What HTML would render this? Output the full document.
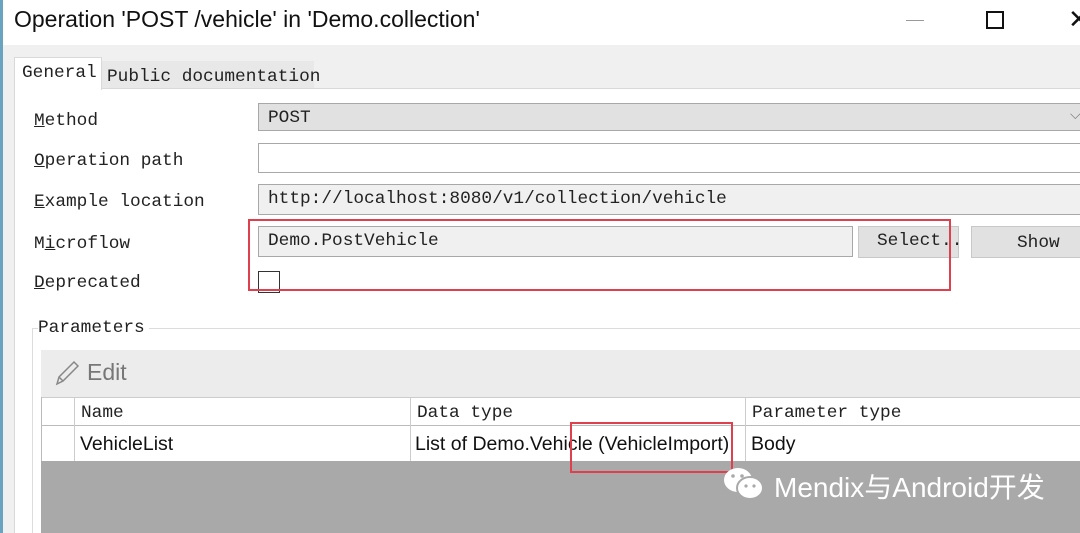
<!DOCTYPE html>
<html><head><meta charset="utf-8"><style>
*{margin:0;padding:0;box-sizing:border-box}
body{width:1080px;height:533px;overflow:hidden;background:#fff;position:relative;font-family:"Liberation Mono","Noto Sans CJK SC",monospace;color:#222}
.a{position:absolute}
.m{font-size:17.8px;font-family:"Liberation Mono",monospace;white-space:nowrap}
.s{font-family:"Liberation Sans","Noto Sans CJK SC",sans-serif;white-space:nowrap}
.fld{position:absolute;border:1px solid #a8a8a8}
u{text-decoration:underline}
</style></head><body>
<div class="a" style="left:0;top:0;width:3px;height:533px;background:#6aa3c0"></div>
<div class="a s" style="left:14px;top:6px;font-size:23px;color:#111">Operation 'POST /vehicle' in 'Demo.collection'</div>
<div class="a" style="left:906px;top:20px;width:18px;height:1px;background:#999"></div>
<div class="a" style="left:986px;top:11px;width:18px;height:18px;border:2px solid #111"></div>
<div class="a s" style="left:1068px;top:4px;font-size:26px;color:#111">✕</div>
<div class="a" style="left:3px;top:45px;width:1077px;height:43px;background:#f0f0f0"></div>
<div class="a" style="left:3px;top:88px;width:11px;height:445px;background:#f0f0f0"></div>
<div class="a" style="left:14px;top:88px;width:1066px;height:1px;background:#d9d9d9"></div>
<div class="a" style="left:14px;top:88px;width:1px;height:445px;background:#d9d9d9"></div>
<div class="a" style="left:102px;top:61px;width:212px;height:27px;background:#e8e8e8"></div>
<div class="a" style="left:14px;top:57px;width:88px;height:33px;background:#fff;border:1px solid #d9d9d9;border-bottom:none"></div>
<div class="a m" style="left:22px;top:63px">General</div>
<div class="a m" style="left:107px;top:67px">Public documentation</div>

<div class="a m" style="left:34px;top:111px"><u>M</u>ethod</div>
<div class="a m" style="left:34px;top:151px"><u>O</u>peration path</div>
<div class="a m" style="left:34px;top:192px"><u>E</u>xample location</div>
<div class="a m" style="left:34px;top:234px">M<u>i</u>croflow</div>
<div class="a m" style="left:34px;top:273px"><u>D</u>eprecated</div>

<div class="fld" style="left:258px;top:103px;width:830px;height:28px;background:#e1e1e1"></div>
<div class="a m" style="left:268px;top:108px">POST</div>
<div class="a s" style="left:1070px;top:106px;font-size:14px;color:#777">⌵</div>
<div class="fld" style="left:258px;top:143px;width:830px;height:30px;background:#fff"></div>
<div class="fld" style="left:258px;top:184px;width:830px;height:31px;background:#f0f0f0"></div>
<div class="a m" style="left:268px;top:189px">http://localhost:8080/v1/collection/vehicle</div>
<div class="fld" style="left:258px;top:226px;width:595px;height:31px;background:#f0f0f0"></div>
<div class="a m" style="left:268px;top:231px">Demo.PostVehicle</div>
<div class="fld" style="left:858px;top:226px;width:101px;height:32px;background:#e1e1e1;border-color:#c8c8c8"></div>
<div class="a m" style="left:877px;top:231px">Select..</div>
<div class="fld" style="left:971px;top:226px;width:120px;height:32px;background:#e1e1e1;border-color:#c8c8c8"></div>
<div class="a m" style="left:1017px;top:233px">Show</div>
<div class="a" style="left:258px;top:271px;width:22px;height:22px;border:1.5px solid #333"></div>
<div class="a" style="left:248px;top:219px;width:703px;height:72px;border:2px solid #e0404e"></div>

<div class="a" style="left:32px;top:328px;width:1048px;height:1px;background:#dcdcdc"></div>
<div class="a" style="left:32px;top:328px;width:1px;height:205px;background:#dcdcdc"></div>
<div class="a m" style="left:38px;top:318px;background:#fff;padding-right:4px">Parameters</div>
<div class="a" style="left:41px;top:350px;width:1039px;height:47px;background:#ececec"></div>
<svg class="a" style="left:54px;top:360px" width="26" height="26" viewBox="0 0 26 26"><path d="M3 24 L5 17 L20 2 L24 6 L9 21 Z M5 17 L9 21" fill="none" stroke="#888" stroke-width="1.5"/></svg>
<div class="a s" style="left:87px;top:359px;font-size:23px;color:#777">Edit</div>
<div class="a" style="left:41px;top:397px;width:1039px;height:64px;background:#fff;border-top:1px solid #ccc"></div>
<div class="a" style="left:41px;top:425px;width:1039px;height:1px;background:#bbb"></div>
<div class="a" style="left:41px;top:397px;width:1px;height:64px;background:#bbb"></div>
<div class="a" style="left:74px;top:397px;width:1px;height:64px;background:#ccc"></div>
<div class="a" style="left:410px;top:397px;width:1px;height:64px;background:#ccc"></div>
<div class="a" style="left:745px;top:397px;width:1px;height:64px;background:#ccc"></div>
<div class="a m" style="left:81px;top:403px">Name</div>
<div class="a m" style="left:417px;top:403px">Data type</div>
<div class="a m" style="left:752px;top:403px">Parameter type</div>
<div class="a s" style="left:80px;top:433px;font-size:19.5px;color:#111">VehicleList</div>
<div class="a s" style="left:415px;top:433px;font-size:19.5px;color:#111">List of Demo.Vehicle (VehicleImport)</div>
<div class="a s" style="left:751px;top:433px;font-size:19.5px;color:#111">Body</div>
<div class="a" style="left:41px;top:461px;width:1039px;height:72px;background:#a9a9a9"></div>
<div class="a" style="left:570px;top:422px;width:163px;height:51px;border:2px solid #e0404e"></div>
<svg class="a" style="left:720px;top:464px" width="50" height="40" viewBox="0 0 50 40"><ellipse cx="18" cy="16" rx="14" ry="12" fill="#fff"/><ellipse cx="30" cy="24" rx="13" ry="11" fill="#fff" stroke="#a9a9a9" stroke-width="2"/><circle cx="13" cy="12" r="1.8" fill="#a9a9a9"/><circle cx="22" cy="12" r="1.8" fill="#a9a9a9"/><circle cx="26" cy="22" r="1.6" fill="#a9a9a9"/><circle cx="34" cy="22" r="1.6" fill="#a9a9a9"/></svg>
<div class="a s" style="left:774px;top:466px;font-size:28px;color:#fff">Mendix与Android开发</div>
</body></html>
